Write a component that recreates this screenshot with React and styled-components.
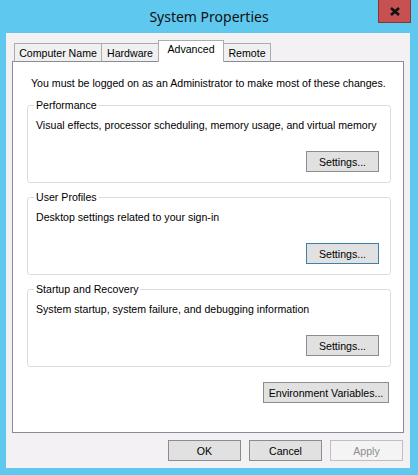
import styled, { createGlobalStyle } from "styled-components";

const GlobalStyle = createGlobalStyle`
  html, body {
    margin: 0;
    padding: 0;
    background: #5FC8EF;
  }
  * {
    box-sizing: border-box;
  }
`

const tabs = [
  { label: "Computer Name", width: 88 },
  { label: "Hardware", width: 58 },
  { label: "Advanced", width: 66, active: true },
  { label: "Remote", width: 48 },
]

export default function App() {
  return (
    <>
      <GlobalStyle />
      <Window>
        <TitleBar>
          <span />
          <Title>System Properties</Title>
          <CloseButton>
            <svg width="10" height="9" viewBox="0 0 10 9">
              <path d="M1 1 L9 8 M9 1 L1 8" stroke="#111" strokeWidth="2.6" strokeLinecap="butt" />
            </svg>
          </CloseButton>
        </TitleBar>
        <Body>
          <TabRow>
            {tabs.map(t => (
              <Tab key={t.label} width={t.width} active={t.active}>{t.label}</Tab>
            ))}
          </TabRow>
          <Panel>
            <Note>You must be logged on as an Administrator to make most of these changes.</Note>
            <Group>
              <legend>Performance</legend>
              <Desc>Visual effects, processor scheduling, memory usage, and virtual memory</Desc>
              <ButtonRow>
                <Button>Settings...</Button>
              </ButtonRow>
            </Group>
            <Group>
              <legend>User Profiles</legend>
              <Desc>Desktop settings related to your sign-in</Desc>
              <ButtonRow>
                <Button focused>Settings...</Button>
              </ButtonRow>
            </Group>
            <Group>
              <legend>Startup and Recovery</legend>
              <Desc>System startup, system failure, and debugging information</Desc>
              <ButtonRow>
                <Button>Settings...</Button>
              </ButtonRow>
            </Group>
            <EnvRow>
              <Button wide>Environment Variables...</Button>
            </EnvRow>
          </Panel>
          <Footer>
            <Button>OK</Button>
            <Button>Cancel</Button>
            <Button disabled>Apply</Button>
          </Footer>
        </Body>
      </Window>
    </>
  )
}

const Window = styled.div`
  width: 418px;
  height: 475px;
  background-color: #5FC8EF;
  display: flex;
  flex-direction: column;
  font-family: "Liberation Sans", Arial, sans-serif;
  font-size: 10.6px;
  color: #000;
`

const TitleBar = styled.div`
  height: 33px;
  display: grid;
  grid-template-columns: 1fr auto 1fr;
  align-items: start;
`

const Title = styled.div`
  font-family: "Noto Sans", "Open Sans", sans-serif;
  font-size: 14px;
  line-height: 20px;
  margin-top: 7px;
  color: #111;
`

const CloseButton = styled.div`
  justify-self: end;
  margin-right: 7px;
  width: 33px;
  height: 23px;
  background-color: #C75050;
  border: 1px solid #7E3A3A;
  border-top: none;
  display: flex;
  align-items: center;
  justify-content: center;
`

const Body = styled.div`
  flex: 1;
  margin: 0 8px 7px 6px;
  background-color: #F4F1F4;
  padding: 7px 6px 0 6px;
  display: flex;
  flex-direction: column;
`

const TabRow = styled.div`
  display: flex;
  align-items: flex-end;
  height: 22px;
  padding-left: 3px;
  margin-bottom: -1px;
  position: relative;
  z-index: 1;
`

const Tab = styled.div`
  width: ${p => p.width}px;
  height: ${p => p.active ? "22px" : "19px"};
  padding-top: ${p => p.active ? "2px" : "3px"};
  margin-left: -1px;
  text-align: center;
  background-color: ${p => p.active ? "#FFFFFF" : "#F0F0F0"};
  border: 1px solid #ACACAC;
  border-bottom: ${p => p.active ? "none" : "1px solid #898C95"};
  line-height: 13px;
  position: relative;
  z-index: ${p => p.active ? 2 : 1};
  white-space: nowrap;
`

const Panel = styled.div`
  height: 372px;
  background-color: #FFFFFF;
  border: 1px solid #898C95;
  padding: 14px 12px 0 14px;
  display: flex;
  flex-direction: column;
`

const Note = styled.div`
  line-height: 14px;
  padding-left: 4px;
  white-space: nowrap;
`

const Group = styled.fieldset`
  margin: 8px 0 0 0;
  padding: 0 11px 10px 6px;
  border: 1px solid #DCDCDC;
  border-radius: 3px;
  min-width: 0;

  legend {
    padding: 0 2px;
    line-height: 14px;
  }

  & + & {
    margin-top: 7px;
  }
`

const Desc = styled.div`
  margin-top: 6px;
  padding-left: 2px;
  line-height: 14px;
  white-space: nowrap;
`

const ButtonRow = styled.div`
  display: flex;
  justify-content: flex-end;
  margin-top: 19px;
`

const EnvRow = styled.div`
  display: flex;
  justify-content: flex-end;
  margin-top: 15px;
  padding-right: 2px;
`

const Footer = styled.div`
  display: flex;
  justify-content: flex-end;
  gap: 8px;
  margin-top: 7px;
  padding-right: 1px;
`

const Button = styled.button`
  width: ${p => p.wide ? "126px" : "73px"};
  height: 21px;
  padding: 0;
  font-family: "Liberation Sans", Arial, sans-serif;
  font-size: 10.6px;
  color: ${p => p.disabled ? "#8D8D8D" : "#000"};
  background-color: ${p => p.disabled ? "#F4F4F4" : "#E1E1E1"};
  border: 1px solid ${p => p.focused ? "#3C7FB1" : p.disabled ? "#BFBFBF" : "#8C8C8C"};
  border-radius: 0;
`
